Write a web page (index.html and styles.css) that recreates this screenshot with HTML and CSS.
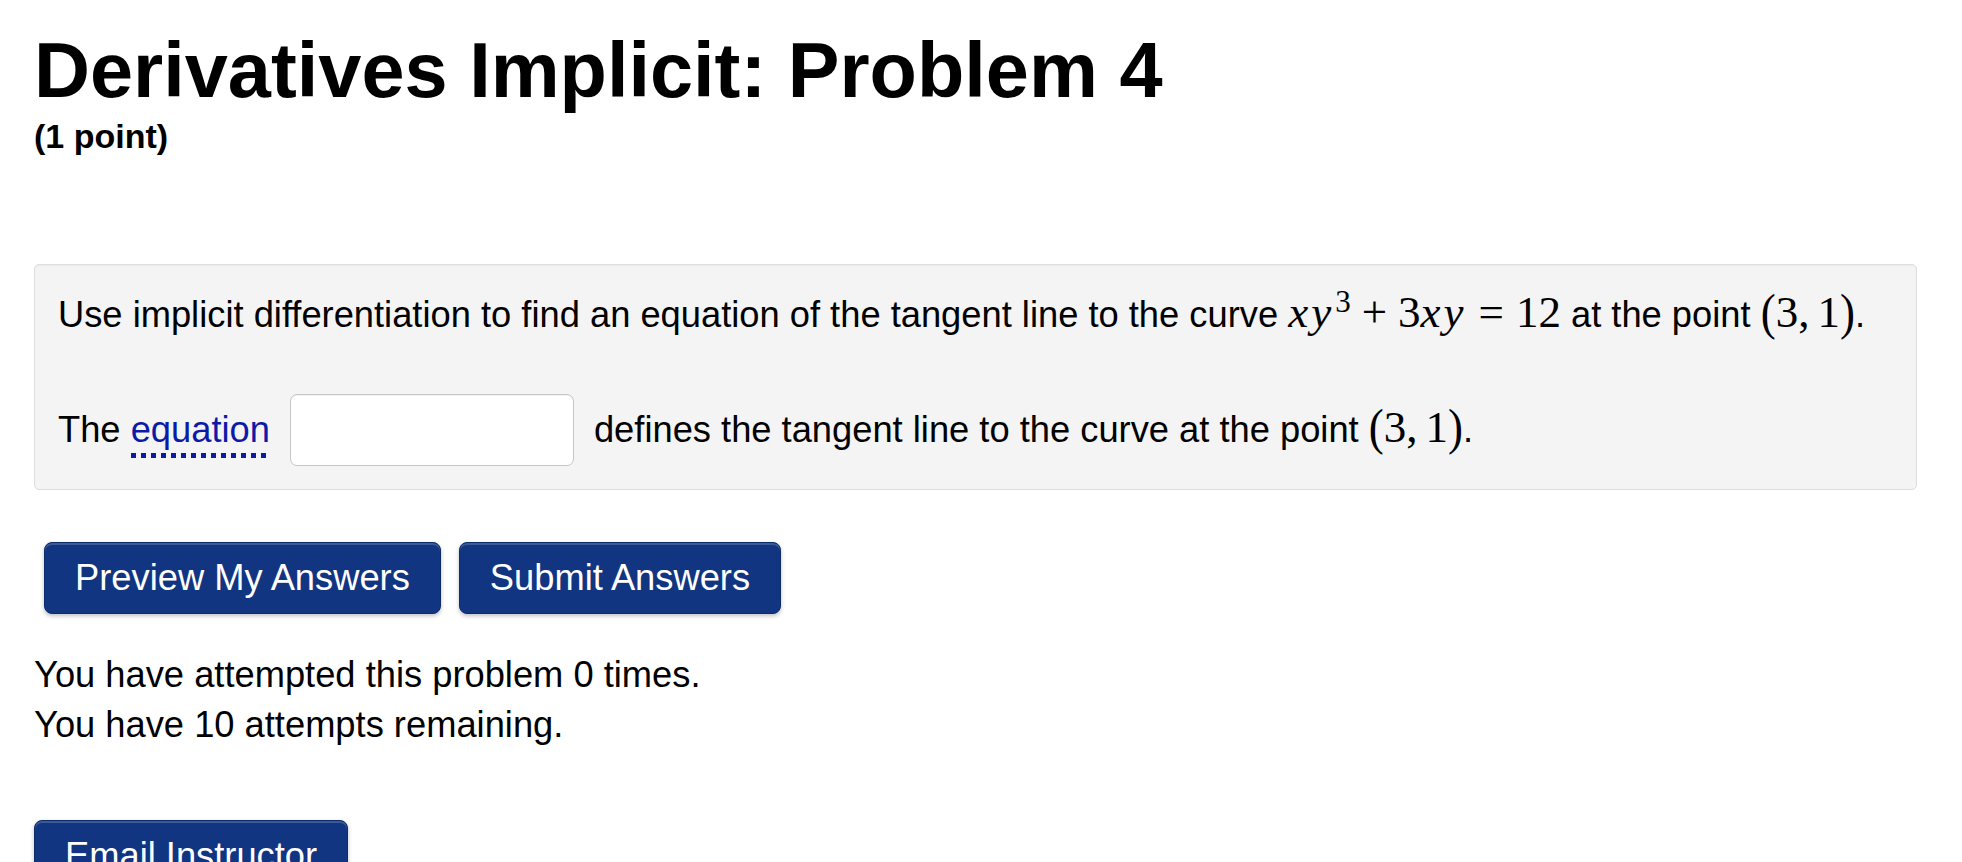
FILE: index.html
```html
<!DOCTYPE html>
<html lang="en">
<head>
<meta charset="utf-8">
<title>Derivatives Implicit: Problem 4</title>
<link rel="stylesheet" href="styles.css">
</head>
<body>
<div class="page">
  <h1 class="title">Derivatives Implicit: Problem 4</h1>
  <div class="points">(1 point)</div>

  <div class="problem">
    <div class="line">Use implicit differentiation to find an equation of the tangent line to the curve <span class="math"><i>x</i><i>y</i><sup>3</sup><span class="op">+</span>3<i>x</i><i>y</i><span class="rel">=</span>12</span> at the point <span class="math"><span class="paren">(</span>3,<span class="thin"></span>1<span class="paren">)</span></span>.</div>
    <div class="answer-row">
      <span>The <a class="term" href="#">equation</a></span>
      <input class="answer" type="text" aria-label="answer">
      <span>defines the tangent line to the curve at the point <span class="math"><span class="paren">(</span>3,<span class="thin"></span>1<span class="paren">)</span></span>.</span>
    </div>
  </div>

  <div class="actions">
    <button class="btn" type="button">Preview My Answers</button>
    <button class="btn" type="button">Submit Answers</button>
  </div>

  <div class="attempts">
    <div>You have attempted this problem 0 times.</div>
    <div>You have 10 attempts remaining.</div>
  </div>

  <div class="email">
    <button class="btn" type="button">Email Instructor</button>
  </div>
</div>
</body>
</html>
```
FILE: styles.css
```css
html, body {
  margin: 0;
  padding: 0;
  background: #ffffff;
}

body {
  font-family: "Liberation Sans", Arial, Helvetica, sans-serif;
  font-size: 36.3px;
  line-height: 50px;
  color: #000000;
  overflow: hidden;
}

.page {
  padding: 27px 45px 0 34px;
}

.title {
  margin: 0;
  font-size: 77.5px;
  line-height: 86px;
  font-weight: bold;
}

.points {
  margin-top: 3px;
  font-size: 34px;
  line-height: 40px;
  font-weight: bold;
}

.problem {
  margin-top: 108px;
  background: #f4f4f4;
  border: 1px solid #dedede;
  border-radius: 5px;
  box-shadow: inset 0 1px 2px rgba(0, 0, 0, 0.04);
  padding: 25px 23px 23px 23px;
}

.line {
  white-space: nowrap;
}

.answer-row {
  margin-top: 54px;
  display: flex;
  align-items: center;
  gap: 20px;
  height: 72px;
  white-space: nowrap;
}

.term {
  color: #0b1ba8;
  text-decoration: none;
  padding-bottom: 8px;
  background-image: linear-gradient(to right, #0b1ba8 50%, transparent 50%);
  background-size: 10px 5px;
  background-repeat: repeat-x;
  background-position: 0 100%;
}

.answer {
  box-sizing: border-box;
  width: 284px;
  height: 72px;
  margin: 0;
  padding: 0 12px;
  border: 1px solid #c6c6c6;
  border-radius: 7px;
  background: #ffffff;
  box-shadow: inset 0 1px 1px rgba(0, 0, 0, 0.06);
  font: inherit;
}

.math {
  font-family: "Liberation Serif", "Times New Roman", serif;
  font-size: 45px;
  line-height: 1;
}

.math i {
  font-style: italic;
  margin-right: 3px;
}

.math sup {
  font-size: 31px;
  line-height: 0;
  vertical-align: 15px;
  margin-left: 1px;
}

.math .op {
  margin: 0 11px;
}

.math .rel {
  margin: 0 12px;
}

.math .paren {
  display: inline-block;
  transform: scaleY(1.12);
}

.math .thin {
  display: inline-block;
  width: 8px;
}

.actions {
  margin-top: 52px;
  margin-left: 10px;
  display: flex;
  gap: 18px;
}

.btn {
  font-family: "Liberation Sans", Arial, Helvetica, sans-serif;
  font-size: 36.3px;
  line-height: 48px;
  color: #ffffff;
  background: #113581;
  border: 1px solid #0d2c6c;
  border-radius: 8px;
  padding: 11px 30px;
  margin: 0;
  box-shadow: inset 0 2px 0 rgba(255, 255, 255, 0.18), 0 2px 4px rgba(0, 0, 0, 0.25);
  cursor: pointer;
  white-space: nowrap;
}

.attempts {
  margin-top: 36px;
}

.email {
  margin-top: 70px;
}
```
